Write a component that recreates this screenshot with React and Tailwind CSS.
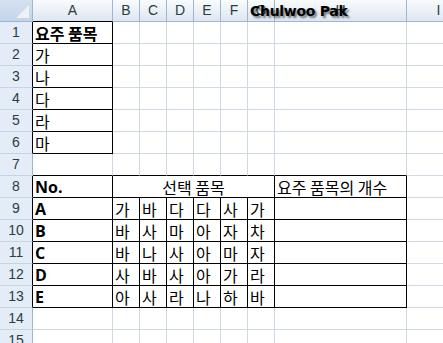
const cols = ["A", "B", "C", "D", "E", "F", "G", "H", "I"];

const rows = [
  ["요주 품목"],
  ["가"],
  ["나"],
  ["다"],
  ["라"],
  ["마"],
];

const picks = [
  ["A", ["가", "바", "다", "다", "사", "가"]],
  ["B", ["바", "사", "마", "아", "자", "차"]],
  ["C", ["바", "나", "사", "아", "마", "자"]],
  ["D", ["사", "바", "사", "아", "가", "라"]],
  ["E", ["아", "사", "라", "나", "하", "바"]],
];

const grid = "border-r border-b border-[#d0d7e5]";
const boxed = "border-r border-b border-r-black border-b-black";
const rowHead =
  "flex items-center justify-center border-r border-b border-[#9eb6ce] border-b-[#c5d3e3] bg-[#e4ecf7] text-[14px] text-[#27413e] font-['Liberation_Sans',sans-serif]";
const text = "flex items-end px-[2px] text-[16px] leading-[20px] text-black whitespace-nowrap overflow-visible";
const latin = "font-bold text-[15px] font-['Open_Sans','Noto_Sans_CJK_KR',sans-serif]";

function RowHead({ n, dark }) {
  return <div className={`${rowHead} ${dark ? "border-r-black" : ""}`}>{n}</div>;
}

function Blank() {
  return <div className={grid} />;
}

export default function App() {
  return (
    <div className="relative h-[343px] w-[443px] overflow-hidden bg-white font-['Noto_Sans_CJK_KR',sans-serif]">
      <div className="grid w-max grid-cols-[33px_80px_repeat(6,27px)_132px_64px] auto-rows-[22px]">
        {/* header row */}
        <div className="relative border-r border-b border-[#9eb6ce] bg-[linear-gradient(#d5e1f0,#c4d5ea)]">
          <svg className="absolute bottom-[3px] right-[3px]" width="13" height="13" viewBox="0 0 13 13">
            <polygon points="13,0 13,13 0,13" fill="#eef2f8" />
          </svg>
        </div>
        {cols.map((c) => (
          <div
            key={c}
            className={`flex items-center justify-center border-r border-b border-[#9eb6ce] bg-[linear-gradient(#f9fbfd,#dde6f1)] text-[14px] text-[#27413e] font-['Liberation_Sans',sans-serif] ${
              c === "A" ? "border-b-black" : ""
            }`}
          >
            {c}
          </div>
        ))}

        {/* rows 1-6 */}
        {rows.map((r, i) => (
          <div key={i} className="contents">
            <RowHead n={i + 1} dark />
            <div className={`${text} ${boxed} ${i === 0 ? "font-bold" : ""}`}>{r[0]}</div>
            {cols.slice(1).map((c) => (
              <Blank key={c} />
            ))}
          </div>
        ))}

        {/* row 7 */}
        <RowHead n={7} />
        {cols.map((c) => (
          <div key={c} className={`${grid} ${c !== "I" ? "border-b-black" : ""}`} />
        ))}

        {/* row 8 */}
        <RowHead n={8} dark />
        <div className={`${text} ${boxed} ${latin}`}>No.</div>
        <div className={`col-span-6 ${text} justify-center ${boxed}`}>선택 품목</div>
        <div className={`${text} ${boxed}`}>요주 품목의 개수</div>
        <Blank />

        {/* rows 9-13 */}
        {picks.map(([label, items], i) => (
          <div key={label} className="contents">
            <RowHead n={9 + i} dark />
            <div className={`${text} ${boxed} ${latin}`}>{label}</div>
            {items.map((it, j) => (
              <div key={j} className={`${text} ${boxed}`}>
                {it}
              </div>
            ))}
            <div className={boxed} />
            <Blank />
          </div>
        ))}

        {/* rows 14-15 */}
        {[14, 15].map((n) => (
          <div key={n} className="contents">
            <RowHead n={n} />
            {cols.map((c) => (
              <Blank key={c} />
            ))}
          </div>
        ))}
      </div>

      <div className="absolute left-[250px] top-[2px] text-[14px] font-bold leading-[18px] text-black font-['DejaVu_Sans',sans-serif] tracking-[-0.3px] [text-shadow:2px_2px_2px_rgba(0,0,0,0.5)]">
        Chulwoo Pak
      </div>
    </div>
  );
}
